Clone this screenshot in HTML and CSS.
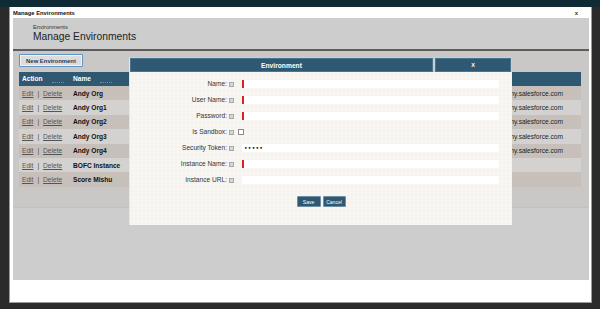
FILE: index.html
```html
<!DOCTYPE html>
<html>
<head>
<meta charset="utf-8">
<link rel="stylesheet" href="styles.css">
</head>
<body>
<div class="dialog">
  <div class="titlebar"><span class="title">Manage Environments</span><span class="close">x</span></div>
  <div class="panel">
    <div class="panel-head">
      <div class="kicker">Environments</div>
      <div class="big">Manage Environments</div>
    </div>
    <div class="section">
      <button class="newbtn">New Environment</button>
      <table class="grid">
        <colgroup><col class="c1"><col class="c2"><col class="c3"><col class="c4"><col></colgroup>
        <thead>
          <tr><th>Action<span class="dots"></span></th><th>Name<span class="dots"></span></th><th></th><th></th><th></th></tr>
        </thead>
        <tbody>
          <tr class="odd"><td><a>Edit</a><i>|</i><a>Delete</a></td><td class="nm">Andy Org</td><td></td><td></td><td class="url">my.salesforce.com</td></tr>
          <tr><td><a>Edit</a><i>|</i><a>Delete</a></td><td class="nm">Andy Org1</td><td></td><td></td><td class="url">my.salesforce.com</td></tr>
          <tr class="odd"><td><a>Edit</a><i>|</i><a>Delete</a></td><td class="nm">Andy Org2</td><td></td><td></td><td class="url">my.salesforce.com</td></tr>
          <tr><td><a>Edit</a><i>|</i><a>Delete</a></td><td class="nm">Andy Org3</td><td></td><td></td><td class="url">my.salesforce.com</td></tr>
          <tr class="odd"><td><a>Edit</a><i>|</i><a>Delete</a></td><td class="nm">Andy Org4</td><td></td><td></td><td class="url">my.salesforce.com</td></tr>
          <tr><td><a>Edit</a><i>|</i><a>Delete</a></td><td class="nm">BOFC Instance</td><td></td><td></td><td class="url"></td></tr>
          <tr class="odd"><td><a>Edit</a><i>|</i><a>Delete</a></td><td class="nm">Score Mishu</td><td></td><td></td><td class="url"></td></tr>
        </tbody>
      </table>
    </div>
  </div>

  <div class="modal">
    <div class="mhead">
      <div class="mcell main">Environment</div>
      <div class="mcell xcell">X</div>
    </div>
    <div class="mbody">
      <div class="form">
        <label>Name:</label><span class="help"></span><span class="inp req"></span>
        <label>User Name:</label><span class="help"></span><span class="inp req"></span>
        <label>Password:</label><span class="help"></span><span class="inp req"></span>
        <label>Is Sandbox:</label><span class="help"></span><span class="chk"></span>
        <label>Security Token:</label><span class="help"></span><span class="inp pw">•••••</span>
        <label>Instance Name:</label><span class="help"></span><span class="inp req"></span>
        <label>Instance URL:</label><span class="help"></span><span class="inp"></span>
      </div>
      <div class="actions">
        <button class="btn">Save</button>
        <button class="btn">Cancel</button>
      </div>
    </div>
  </div>
</div>
</body>
</html>
```

FILE: styles.css
```css
* { box-sizing: border-box; }
html, body { margin: 0; padding: 0; }
body {
  width: 600px;
  height: 309px;
  overflow: hidden;
  background: linear-gradient(#0f2b36 0, #0f2b36 7px, #2b2b2c 7px);
  font-family: "Liberation Sans", Arial, sans-serif;
  padding: 7px 0 0 9px;
}
.dialog {
  position: relative;
  width: 583px;
  height: 296px;
  background: #ffffff;
  border: 1px solid #9a9a9a;
  border-top: none;
}
.titlebar {
  height: 11px;
  display: flex;
  justify-content: space-between;
  align-items: center;
  padding: 1px 13px 0 3px;
  color: #111;
}
.title { font-size: 5.8px; font-weight: bold; }
.close { font-size: 6px; font-weight: bold; color: #333; }
.panel {
  margin: 0 2px 0 3px;
  height: 262px;
  background: #cdcdcd;
}
.panel-head {
  height: 33px;
  padding: 6px 0 0 20px;
  border-bottom: 2px solid #5c5c5c;
  color: #222;
}
.kicker { font-size: 5.7px; line-height: 7px; color: #333; }
.big { font-size: 10.3px; line-height: 11px; }
.section {
  background: #c9c8c6;
  padding: 3px 6px 20px 6px;
  border-bottom: 1px solid #c2c1bf;
}
.newbtn {
  display: block;
  width: 64px;
  height: 13px;
  padding: 0;
  margin: 0;
  font-family: "Liberation Sans", Arial, sans-serif;
  font-size: 5.9px;
  font-weight: bold;
  color: #1e3b56;
  background: #dcdcdc;
  border: 1px solid #5f93c6;
  box-shadow: inset 0 0 0 1px #f2f2f2;
  border-radius: 1px;
}
.grid {
  margin-top: 5px;
  width: 562px;
  border-collapse: collapse;
  table-layout: fixed;
  font-size: 6.6px;
}
.c1 { width: 54px; }
.c2 { width: 120px; }
.c3 { width: 140px; }
.c4 { width: 60px; }
.grid th {
  height: 14px;
  background: #2f5873;
  color: #fff;
  text-align: left;
  font-weight: bold;
  padding: 0 0 0 3px;
  white-space: nowrap;
}
.grid th:nth-child(2) { padding-left: 0; }
.dots {
  display: inline-block;
  width: 12px;
  margin-left: 9px;
  border-bottom: 1px dotted #6f90a6;
  vertical-align: -2px;
}
.grid td {
  height: 14.4px;
  padding: 0 0 0 3px;
  color: #333;
  white-space: nowrap;
  overflow: hidden;
}
.grid td.nm { padding-left: 0; font-weight: bold; color: #111; }
.grid td.url { text-align: right; padding-right: 18px; color: #222; }
.grid tr { background: #d3d2d0; }
.grid tr.odd { background: #c7c0ba; }
.grid a { color: #555; text-decoration: underline; }
.grid i { font-style: normal; color: #444; margin: 0 4px; }

.modal {
  position: absolute;
  left: 119px;
  top: 50px;
  width: 383px;
  height: 168px;
  background-color: #f8f6f3;
  background-image: radial-gradient(circle, #eee8e3 0.5px, transparent 0.8px);
  background-size: 4px 4px;
  border-left: 1px solid #e6e6e6;
}
.mhead {
  display: flex;
  gap: 2px;
  padding: 1px 1px 0 0;
  background: #cdcdcd;
}
.mcell {
  height: 14px;
  background: #2f5873;
  border: 1px solid #4a7590;
  color: #fff;
  font-size: 6.7px;
  font-weight: bold;
  display: flex;
  align-items: center;
  justify-content: center;
}
.main { width: 303px; }
.xcell { width: 76px; font-size: 5.5px; }
.mbody { padding-top: 4px; }
.form {
  display: grid;
  grid-template-columns: 97px 5px 1fr;
  grid-auto-rows: 16px;
  column-gap: 2px;
  align-items: center;
}
.form label {
  text-align: right;
  font-size: 6.6px;
  line-height: 8px;
  color: #333;
}
.help {
  width: 5px;
  height: 5px;
  background: #d6d6d6;
  border: 1px solid #a9a9a9;
}
.inp {
  display: block;
  margin-left: 6px;
  width: 257px;
  height: 8px;
  background: #fff;
  font-size: 6px;
  line-height: 8px;
  color: #111;
  padding-left: 2px;
}
.inp.req { border-left: 2px solid #e0221f; }
.inp.pw { letter-spacing: 0.3px; font-size: 6px; color: #000; font-family: "DejaVu Sans", sans-serif; line-height: 8px; }
.chk {
  width: 6px;
  height: 6px;
  margin-left: 2px;
  background: #fff;
  border: 1px solid #8a8a8a;
}
.actions {
  display: flex;
  justify-content: center;
  gap: 2px;
  margin-top: 8px;
}
.btn {
  height: 11px;
  padding: 0;
  background: #2f5873;
  color: #fff;
  border: 1px solid #6f8fa6;
  font-family: "Liberation Sans", Arial, sans-serif;
  font-size: 5px;
  border-radius: 1px;
}
.btn:first-child { width: 24px; }
.btn:last-child { width: 23px; }
```
